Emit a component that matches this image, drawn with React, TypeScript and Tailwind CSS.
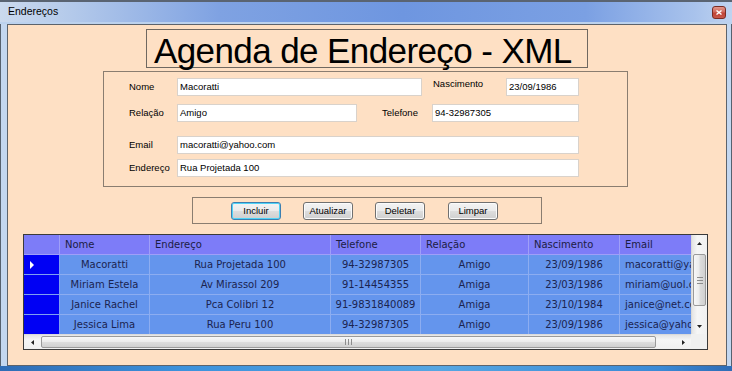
import React from "react";

function TB({ w, v }: { w: string; v: string }) {
  return (
    <div className={`h-[18px] bg-white border border-[#d9d2cb] pl-[2px] flex items-center text-[9.5px] text-black whitespace-nowrap ${w}`}>
      {v}
    </div>
  );
}

function Btn({ label, focused, cls }: { label: string; focused?: boolean; cls: string }) {
  return (
    <div
      className={`w-[50px] h-[18px] rounded-[3px] border flex items-center justify-center text-[9.5px] text-black bg-[linear-gradient(#f3f3f3_0%,#ebebeb_48%,#dddddd_52%,#cfcfcf_100%)] ${
        focused ? "border-[#3c7fb1] shadow-[inset_0_0_0_1px_#4fd3f7]" : "border-[#707070] shadow-[inset_0_0_0_1px_#fbfbfb]"
      } ${cls}`}
    >
      {label}
    </div>
  );
}

const rows = [
  ["Macoratti", "Rua Projetada 100", "94-32987305", "Amigo", "23/09/1986", "macoratti@yahoo.com"],
  ["Miriam Estela", "Av Mirassol 209", "91-14454355", "Amiga", "23/03/1986", "miriam@uol.com.br"],
  ["Janice Rachel", "Pca Colibri 12", "91-9831840089", "Amiga", "23/10/1984", "janice@net.com"],
  ["Jessica Lima", "Rua Peru 100", "94-32987305", "Amigo", "23/09/1986", "jessica@yahoo.com"],
];

function GripV() {
  return (
    <svg width="7" height="6" viewBox="0 0 7 6">
      <rect x="0" y="0" width="1" height="6" fill="#8c8c8c" />
      <rect x="3" y="0" width="1" height="6" fill="#8c8c8c" />
      <rect x="6" y="0" width="1" height="6" fill="#8c8c8c" />
    </svg>
  );
}

function GripH() {
  return (
    <svg width="6" height="7" viewBox="0 0 6 7">
      <rect x="0" y="0" width="6" height="1" fill="#8c8c8c" />
      <rect x="0" y="3" width="6" height="1" fill="#8c8c8c" />
      <rect x="0" y="6" width="6" height="1" fill="#8c8c8c" />
    </svg>
  );
}

export default function App() {
  return (
    <div className="w-[732px] h-[371px] flex flex-col overflow-hidden bg-[#bfd4ef] font-['Liberation_Sans',Arial,sans-serif]">
      {/* Title bar */}
      <div className="h-[24px] shrink-0 flex items-center border-t-[2px] border-b-[2px] border-t-[#5a6472] border-b-[#bcd2ee] bg-[linear-gradient(90deg,#cbdaee_0%,#b3c9ea_10%,#7fa2e2_30%,#6e96e0_55%,#7ba0e3_80%,#a9c3ec_95%,#bfd3f0_100%)]">
        <span className="ml-[8px] text-[10.5px] text-black">Endereços</span>
        <div className="ml-auto mr-[6px] w-[14px] h-[13px] rounded-[3px] border border-[#7a2c24] bg-[linear-gradient(#e3968b_0%,#d06a5e_45%,#c04437_55%,#c8584a_100%)] flex items-center justify-center">
          <svg width="6" height="5" viewBox="0 0 6 5">
            <path d="M0.5 0.5 L5.5 4.5 M5.5 0.5 L0.5 4.5" stroke="#ffffff" strokeWidth="1.4" />
          </svg>
        </div>
      </div>

      <div className="flex h-[342px] shrink-0">
        <div className="w-[7px] border-l border-[#56616f] bg-[#c3d7f0]" />
        {/* Client area */}
        <div className="w-[720px] border border-[#5c636c] bg-[#fee0c4] flex flex-col">
          {/* Title label */}
          <div className="ml-[138px] mt-[4px] w-[442px] h-[39px] shrink-0 border border-[#6f6860] flex items-center pl-[7px] pt-[4px] text-[35px] leading-none tracking-[-0.6px] text-black whitespace-nowrap">
            Agenda de Endereço - XML
          </div>

          {/* Form group */}
          <div className="ml-[95px] mt-[3px] w-[525px] h-[116px] shrink-0 border border-[#8a7d70] flex flex-col pl-[25px] pt-[6px] text-[9.5px] text-black">
            <div className="flex items-center h-[18px]">
              <span className="w-[48px]">Nome</span>
              <TB w="w-[245px]" v="Macoratti" />
              <span className="ml-[11px] w-[73px] mb-[6px]">Nascimento</span>
              <TB w="w-[73px]" v="23/09/1986" />
            </div>
            <div className="flex items-center h-[18px] mt-[8px]">
              <span className="w-[48px]">Relação</span>
              <TB w="w-[180px]" v="Amigo" />
              <span className="ml-[25px] w-[50px]">Telefone</span>
              <TB w="w-[147px]" v="94-32987305" />
            </div>
            <div className="flex items-center h-[18px] mt-[14px]">
              <span className="w-[48px]">Email</span>
              <TB w="w-[402px]" v="macoratti@yahoo.com" />
            </div>
            <div className="flex items-center h-[18px] mt-[5px]">
              <span className="w-[48px]">Endereço</span>
              <TB w="w-[402px]" v="Rua Projetada 100" />
            </div>
          </div>

          {/* Buttons group */}
          <div className="ml-[184px] mt-[10px] w-[350px] h-[27px] shrink-0 border border-[#8a7d70] flex items-start pt-[4px] pl-[38px]">
            <Btn label="Incluir" focused cls="" />
            <Btn label="Atualizar" cls="ml-[22px]" />
            <Btn label="Deletar" cls="ml-[22px]" />
            <Btn label="Limpar" cls="ml-[23px]" />
          </div>

          {/* Data grid */}
          <div className="ml-[15px] mt-[10px] w-[685px] h-[116px] shrink-0 border border-[#3a3a3a] flex flex-col font-['DejaVu_Sans',Verdana,sans-serif] text-[10px]">
            <div className="flex h-[99px]">
              <div className="w-[667px] h-[99px] overflow-hidden flex flex-col">
                {/* Header */}
                <div className="flex h-[20px] shrink-0 bg-[#7d7cf8] text-[#1c1c44]">
                  <div className="w-[36px] border-r border-b border-[#9f9ff8]" />
                  <div className="w-[90px] border-r border-b border-[#9f9ff8] pl-[5px] flex items-center">Nome</div>
                  <div className="w-[181px] border-r border-b border-[#9f9ff8] pl-[5px] flex items-center">Endereço</div>
                  <div className="w-[90px] border-r border-b border-[#9f9ff8] pl-[5px] flex items-center">Telefone</div>
                  <div className="w-[108px] border-r border-b border-[#9f9ff8] pl-[5px] flex items-center">Relação</div>
                  <div className="w-[91px] border-r border-b border-[#9f9ff8] pl-[5px] flex items-center">Nascimento</div>
                  <div className="w-[71px] border-b border-[#9f9ff8] pl-[5px] flex items-center whitespace-nowrap overflow-hidden">Email</div>
                </div>
                {rows.map((r, i) => (
                  <div key={i} className={`flex shrink-0 bg-[#6495ed] text-[#1b2450] ${i === 3 ? "h-[19px]" : "h-[20px]"}`}>
                    <div className={`w-[36px] bg-[#0000f4] border-r border-[#7f9ff0] pl-[6px] flex items-center ${i === 3 ? "" : "border-b"}`}>
                      {i === 0 && (
                        <svg width="4" height="8" viewBox="0 0 4 8">
                          <path d="M0 0 L4 4 L0 8 Z" fill="#ffffff" />
                        </svg>
                      )}
                    </div>
                    <div className={`w-[90px] border-r border-[#8cadf1] flex items-center justify-center whitespace-nowrap ${i === 3 ? "" : "border-b"}`}>{r[0]}</div>
                    <div className={`w-[181px] border-r border-[#8cadf1] flex items-center justify-center whitespace-nowrap ${i === 3 ? "" : "border-b"}`}>{r[1]}</div>
                    <div className={`w-[90px] border-r border-[#8cadf1] flex items-center justify-center whitespace-nowrap ${i === 3 ? "" : "border-b"}`}>{r[2]}</div>
                    <div className={`w-[108px] border-r border-[#8cadf1] flex items-center justify-center whitespace-nowrap ${i === 3 ? "" : "border-b"}`}>{r[3]}</div>
                    <div className={`w-[91px] border-r border-[#8cadf1] flex items-center justify-center whitespace-nowrap ${i === 3 ? "" : "border-b"}`}>{r[4]}</div>
                    <div className={`w-[71px] border-[#8cadf1] pl-[5px] flex items-center whitespace-nowrap overflow-hidden ${i === 3 ? "" : "border-b"}`}>{r[5]}</div>
                  </div>
                ))}
              </div>
              {/* Vertical scrollbar */}
              <div className="w-[16px] h-[99px] flex flex-col bg-[linear-gradient(90deg,#e4e4e4,#f6f6f6_35%,#f0f0f0)] border-l border-[#dadada]">
                <div className="h-[16px] shrink-0 flex items-center justify-center">
                  <svg width="5" height="3" viewBox="0 0 5 3">
                    <path d="M0 3 L2.5 0 L5 3 Z" fill="#222" />
                  </svg>
                </div>
                <div className="mt-[3px] h-[52px] shrink-0 mx-[1px] rounded-[2px] border border-[#9a9a9a] bg-[linear-gradient(90deg,#f7f7f7,#ececec_45%,#dcdcdc_55%,#d0d0d0)] flex items-center justify-center">
                  <GripH />
                </div>
                <div className="flex-1" />
                <div className="h-[16px] shrink-0 flex items-center justify-center">
                  <svg width="5" height="3" viewBox="0 0 5 3">
                    <path d="M0 0 L2.5 3 L5 0 Z" fill="#222" />
                  </svg>
                </div>
              </div>
            </div>
            <div className="flex h-[15px]">
              {/* Horizontal scrollbar */}
              <div className="w-[667px] h-[15px] flex bg-[linear-gradient(#e4e4e4,#f6f6f6_35%,#f0f0f0)] border-t border-[#dadada]">
                <div className="w-[16px] shrink-0 flex items-center justify-center">
                  <svg width="3" height="5" viewBox="0 0 3 5">
                    <path d="M3 0 L0 2.5 L3 5 Z" fill="#222" />
                  </svg>
                </div>
                <div className="ml-[1px] w-[615px] shrink-0 my-[1px] rounded-[2px] border border-[#9a9a9a] bg-[linear-gradient(#f7f7f7,#ececec_45%,#dcdcdc_55%,#d0d0d0)] flex items-center justify-center">
                  <GripV />
                </div>
                <div className="flex-1" />
                <div className="w-[16px] shrink-0 flex items-center justify-center">
                  <svg width="3" height="5" viewBox="0 0 3 5">
                    <path d="M0 0 L3 2.5 L0 5 Z" fill="#222" />
                  </svg>
                </div>
              </div>
              <div className="w-[16px] h-[15px] bg-[#f0f0f0]" />
            </div>
          </div>
        </div>
        <div className="w-[5px] border-r border-[#56616f] bg-[#c3d7f0]" />
      </div>
      <div className="h-[5px] shrink-0 bg-[linear-gradient(90deg,#2f6cb5,#3d92dc_25%,#56a6e2_60%,#3b8ad6_90%,#2f6cb5)]" />
    </div>
  );
}
